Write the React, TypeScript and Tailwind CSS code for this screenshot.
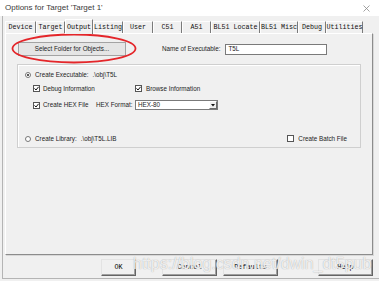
import React from 'react';

const tabs = [
  { name: 'Device', w: 31 },
  { name: 'Target', w: 29 },
  { name: 'Output', w: 28, active: true },
  { name: 'Listing', w: 30 },
  { name: 'User', w: 30 },
  { name: 'C51', w: 29 },
  { name: 'A51', w: 29 },
  { name: 'BL51 Locate', w: 49 },
  { name: 'BL51 Misc', w: 38 },
  { name: 'Debug', w: 28 },
  { name: 'Utilities', w: 37 },
];

const mono = "font-['Liberation_Mono',monospace]";

function Check({ on = false }: { on?: boolean }) {
  return (
    <div className="w-[7px] h-[7px] border border-[#555] bg-white flex items-center justify-center shrink-0">
      {on && (
        <svg width="5" height="5" viewBox="0 0 5 5">
          <path d="M0.5 2.4 L2 4 L4.6 0.8" stroke="#111" strokeWidth="1" fill="none" />
        </svg>
      )}
    </div>
  );
}

function Radio({ on = false }: { on?: boolean }) {
  return (
    <div className="w-[6px] h-[6px] rounded-full border border-[#777] bg-white flex items-center justify-center shrink-0">
      {on && <div className="w-[2px] h-[2px] rounded-full bg-[#222]" />}
    </div>
  );
}

function ClassicButton({ label, w }: { label: string; w: number }) {
  return (
    <div
      className={`h-[17px] bg-[#f0f0f0] border border-t-[#e3e3e3] border-l-[#e3e3e3] border-r-[#646464] border-b-[#646464] shadow-[inset_-1px_-1px_0_#a0a0a0] flex items-center justify-center whitespace-nowrap text-[6.8px] text-[#000] ${mono}`}
      style={{ width: w }}
    >
      {label}
    </div>
  );
}

export default function App() {
  return (
    <div className="relative w-[379px] h-[281px] bg-[#f0f0f0] overflow-hidden font-['Liberation_Sans',Arial,sans-serif] text-[#1c1c1c]">
      {/* title bar */}
      <div className="h-[16px] bg-white flex items-center justify-between pl-[5px] pr-[9px]">
        <span className="text-[8px] text-[#3a3a3a]">Options for Target 'Target 1'</span>
        <svg width="7" height="7" viewBox="0 0 7 7">
          <path d="M0.5 0.5 L6.5 6.5 M6.5 0.5 L0.5 6.5" stroke="#8a8a8a" strokeWidth="0.8" />
        </svg>
      </div>

      <div className="border-l border-b border-[#b4b4b4] ml-[2px] h-[263px] flex flex-col">
        {/* tabs */}
        <div className="mt-[3px] ml-[2px] h-[15px] flex items-end relative z-10 mb-[-1px]">
          {tabs.map((t) =>
            t.active ? (
              <div
                key={t.name}
                className={`h-[15px] bg-[#f0f0f0] border-t border-l border-r border-t-white border-l-white border-r-[#7a7a7a] flex items-start justify-center pt-[2px] whitespace-nowrap text-[6.7px] text-[#000] ${mono}`}
                style={{ width: t.w }}
              >
                {t.name}
              </div>
            ) : (
              <div
                key={t.name}
                className={`h-[12px] mb-[1px] border-t border-l border-r border-t-[#fdfdfd] border-l-[#fdfdfd] border-r-[#7a7a7a] flex items-center justify-center whitespace-nowrap text-[6.7px] text-[#111] ${mono}`}
                style={{ width: t.w }}
              >
                {t.name}
              </div>
            )
          )}
        </div>

        {/* panel */}
        <div className="ml-[2px] w-[368px] h-[222px] border border-t-white border-l-white border-r-[#8c8c8c] border-b-[#8c8c8c] shadow-[1px_1px_0_#d8d8d8] flex flex-col">
          <div className="mt-[8px] ml-[12px] flex items-center">
            <div className="w-[108px] h-[14px] bg-[#e5e5e5] border border-[#a3a3a3] flex items-center justify-center text-[6.3px]">
              Select Folder for Objects...
            </div>
            <span className="ml-[36px] text-[6.3px]">Name of Executable:</span>
            <div className="ml-[5px] w-[102px] h-[11px] bg-white border border-[#7a7a7a] flex items-center pl-[2px] text-[6.3px]">
              T5L
            </div>
          </div>

          <div className="mt-[8px] ml-[11px] w-[344px] border border-[#cfcfcf] shadow-[inset_1px_1px_0_#fff] flex flex-col text-[6.3px]">
            <div className="mt-[5px] h-[9px] pl-[7px] flex items-center">
              <Radio on />
              <span className="ml-[4px]">Create Executable:</span>
              <span className="ml-[4px]">.\obj\T5L</span>
            </div>
            <div className="mt-[5px] h-[9px] pl-[15px] flex items-center">
              <div className="w-[102px] flex items-center">
                <Check on />
                <span className="ml-[3px]">Debug Information</span>
              </div>
              <Check on />
              <span className="ml-[4px]">Browse Information</span>
            </div>
            <div className="mt-[7px] h-[10px] pl-[15px] flex items-center">
              <div className="w-[63px] flex items-center">
                <Check on />
                <span className="ml-[3px]">Create HEX File</span>
              </div>
              <span className="w-[39px]">HEX Format:</span>
              <div className="w-[83px] h-[10px] bg-white border border-[#7a7a7a] flex items-center justify-between pl-[2px]">
                <span>HEX-80</span>
                <div className="w-[8px] h-[8px] bg-[#f0f0f0] border border-t-white border-l-white border-r-[#6a6a6a] border-b-[#6a6a6a] flex items-center justify-center">
                  <svg width="4" height="3" viewBox="0 0 4 3">
                    <path d="M0 0 H4 L2 2.5 Z" fill="#111" />
                  </svg>
                </div>
              </div>
            </div>
            <div className="mt-[24px] mb-[4px] h-[9px] pl-[7px] pr-[13px] flex items-center justify-between">
              <div className="flex items-center">
                <Radio />
                <span className="ml-[4px]">Create Library:</span>
                <span className="ml-[4px]">.\obj\T5L.LIB</span>
              </div>
              <div className="flex items-center">
                <Check />
                <span className="ml-[4px]">Create Batch File</span>
              </div>
            </div>
          </div>
        </div>

        {/* bottom buttons */}
        <div className="mt-[4px] ml-[98px] flex items-center">
          <ClassicButton label="OK" w={35} />
          <div className="ml-[26px]">
            <ClassicButton label="Cancel" w={55} />
          </div>
          <div className="ml-[6px]">
            <ClassicButton label="Defaults" w={55} />
          </div>
          <div className="ml-[40px]">
            <ClassicButton label="Help" w={55} />
          </div>
        </div>
      </div>

      {/* red highlight ellipse */}
      <svg className="absolute left-[11px] top-[33px]" width="126" height="31" viewBox="0 0 126 31">
        <ellipse cx="63" cy="15.5" rx="61.5" ry="14" fill="none" stroke="#e4262a" strokeWidth="1.8" />
      </svg>

      {/* watermark */}
      <div className="absolute left-[133px] top-[256px] text-[16px] text-white/80 [text-shadow:0_0_1px_#9a9a9a] font-['Liberation_Sans',Arial,sans-serif] leading-none">
        https://blog.csdn.net/dwin_dt5pub
      </div>
    </div>
  );
}
